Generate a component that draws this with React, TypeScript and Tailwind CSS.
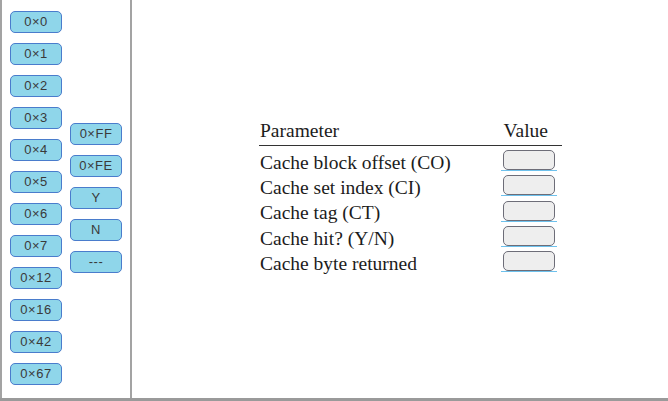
import React from "react";

const leftChips = ["0×0", "0×1", "0×2", "0×3", "0×4", "0×5", "0×6", "0×7", "0×12", "0×16", "0×42", "0×67"];
const rightChips = ["0×FF", "0×FE", "Y", "N", "---"];

const rows = [
  "Cache block offset (CO)",
  "Cache set index (CI)",
  "Cache tag (CT)",
  "Cache hit? (Y/N)",
  "Cache byte returned",
];

function Chip({ label }: { label: string }) {
  return (
    <div className="w-[52px] h-[22px] flex items-center justify-center rounded-[5px] border border-[#4a7ccc] bg-[#8fd6ea] text-[13px] tracking-[0.5px] text-[#3a3a3a] font-['Liberation_Sans',Arial,sans-serif]">
      {label}
    </div>
  );
}

function AnswerBox() {
  return (
    <div className="px-[2px] border-b border-[#6ec1ec]">
      <div className="w-[52px] h-[20px] rounded-[5px] border-[1.5px] border-[#6d6d78] bg-[#eeeeee]" />
    </div>
  );
}

export default function App() {
  return (
    <div className="w-[668px] h-[401px] flex flex-row bg-white border-b-[3px] border-[#9a9a9a] overflow-hidden">
      <div className="w-[132px] h-full shrink-0 border-l-2 border-r-2 border-[#a3a3a3] flex flex-row gap-[8px] pl-[8px] pt-[11px]">
        <div className="flex flex-col gap-[10px]">
          {leftChips.map((c) => (
            <Chip key={c} label={c} />
          ))}
        </div>
        <div className="flex flex-col gap-[10px] pt-[112px]">
          {rightChips.map((c) => (
            <Chip key={c} label={c} />
          ))}
        </div>
      </div>

      <div className="flex-1 pl-[127px] pt-[119px] font-['Liberation_Serif','Times_New_Roman',serif] text-[#1c1c1c] text-[19.5px]">
        <div className="w-[303px]">
          <div className="flex flex-row items-end justify-between h-[27px] pl-[1px] pr-[14px] border-b border-[#333] leading-none pb-[5px]">
            <span>Parameter</span>
            <span>Value</span>
          </div>
          <div className="flex flex-col pt-[2px]">
            {rows.map((r) => (
              <div key={r} className="flex flex-row items-center justify-between h-[25.3px] pl-[1px] pr-[5px]">
                <span className="leading-none pt-[4px]">{r}</span>
                <AnswerBox />
              </div>
            ))}
          </div>
        </div>
      </div>
    </div>
  );
}
